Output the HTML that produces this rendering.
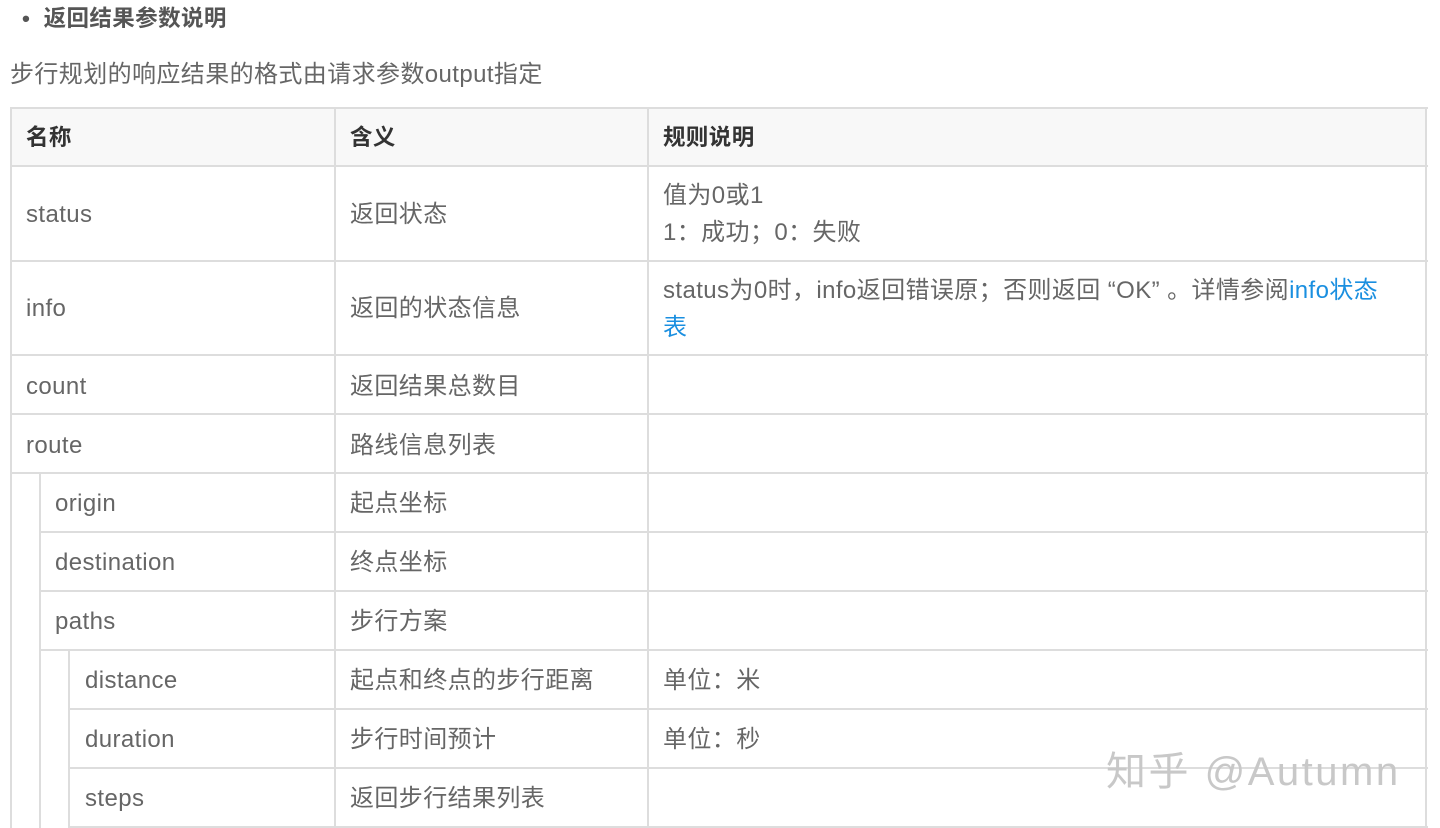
<!DOCTYPE html>
<html><head><meta charset="utf-8"><style>
body{margin:0;width:1440px;height:828px;overflow:hidden;background:#fff;position:relative;font-family:"Liberation Sans","Noto Sans CJK SC",sans-serif;color:#666}
.h{position:absolute;background:#ddd;height:2px}
.v{position:absolute;background:#ddd;width:2px}
.t{position:absolute;font-size:24px;line-height:37px;white-space:nowrap;letter-spacing:0.4px}
.b{font-weight:bold;color:#333;font-size:22.5px}
a{color:#1a8fe0;text-decoration:none}
</style></head><body>
<div class="t b" style="left:22px;top:0px;color:#555">•&nbsp;&nbsp;返回结果参数说明</div>
<div class="t" style="left:10px;top:56px">步行规划的响应结果的格式由请求参数output指定</div>
<div style="position:absolute;left:11px;top:108px;width:1415px;height:58px;background:#f8f8f8"></div>
<div class="h" style="left:11px;top:107px;width:1417px"></div>
<div class="h" style="left:11px;top:165px;width:1417px"></div>
<div class="h" style="left:11px;top:260px;width:1417px"></div>
<div class="h" style="left:11px;top:354px;width:1417px"></div>
<div class="h" style="left:11px;top:413px;width:1417px"></div>
<div class="h" style="left:11px;top:472px;width:1417px"></div>
<div class="h" style="left:40px;top:531px;width:1388px"></div>
<div class="h" style="left:40px;top:590px;width:1388px"></div>
<div class="h" style="left:40px;top:649px;width:1388px"></div>
<div class="h" style="left:69px;top:708px;width:1359px"></div>
<div class="h" style="left:69px;top:767px;width:1359px"></div>
<div class="h" style="left:69px;top:826px;width:1359px"></div>
<div class="v" style="left:10px;top:107px;height:721px"></div>
<div class="v" style="left:39px;top:473px;height:355px"></div>
<div class="v" style="left:68px;top:650px;height:178px"></div>
<div class="v" style="left:334px;top:107px;height:721px"></div>
<div class="v" style="left:647px;top:107px;height:721px"></div>
<div class="v" style="left:1425px;top:107px;height:721px"></div>
<div class="t b" style="left:26px;top:119px">名称</div>
<div class="t b" style="left:350px;top:119px">含义</div>
<div class="t b" style="left:663px;top:119px">规则说明</div>
<div class="t" style="left:26px;top:196px">status</div><div class="t" style="left:350px;top:196px">返回状态</div>
<div class="t" style="left:663px;top:177px">值为0或1</div><div class="t" style="left:663px;top:214px">1：成功；0：失败</div>
<div class="t" style="left:26px;top:290px">info</div><div class="t" style="left:350px;top:290px">返回的状态信息</div>
<div class="t" style="left:663px;top:272px">status为0时，info返回错误原；否则返回 “OK” 。详情参阅<a>info状态</a></div><div class="t" style="left:663px;top:309px"><a>表</a></div>
<div class="t" style="left:26px;top:368px">count</div><div class="t" style="left:350px;top:368px">返回结果总数目</div>
<div class="t" style="left:26px;top:427px">route</div><div class="t" style="left:350px;top:427px">路线信息列表</div>
<div class="t" style="left:55px;top:485px">origin</div><div class="t" style="left:350px;top:485px">起点坐标</div>
<div class="t" style="left:55px;top:544px">destination</div><div class="t" style="left:350px;top:544px">终点坐标</div>
<div class="t" style="left:55px;top:603px">paths</div><div class="t" style="left:350px;top:603px">步行方案</div>
<div class="t" style="left:85px;top:662px">distance</div><div class="t" style="left:350px;top:662px">起点和终点的步行距离</div><div class="t" style="left:663px;top:662px">单位：米</div>
<div class="t" style="left:85px;top:721px">duration</div><div class="t" style="left:350px;top:721px">步行时间预计</div><div class="t" style="left:663px;top:721px">单位：秒</div>
<div class="t" style="left:85px;top:780px">steps</div><div class="t" style="left:350px;top:780px">返回步行结果列表</div>
<div class="t" style="left:1106px;top:748px;font-size:40px;line-height:48px;color:#c8c8c8;letter-spacing:2.5px">知乎 @Autumn</div>
</body></html>
